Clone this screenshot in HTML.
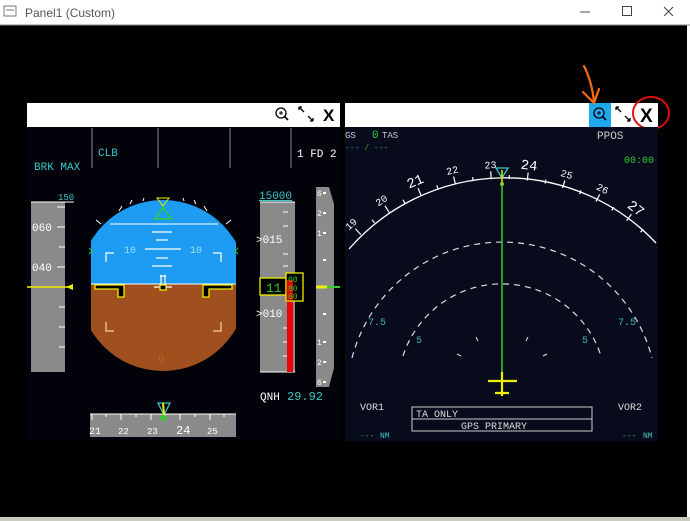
<!DOCTYPE html>
<html><head><meta charset="utf-8"><style>
html,body{margin:0;padding:0;background:#fff;}
svg{display:block;font-family:"Liberation Mono",monospace;}
.t{font-family:"Liberation Sans",sans-serif;}
</style></head><body>
<svg width="690" height="521" viewBox="0 0 690 521" xmlns="http://www.w3.org/2000/svg">
<rect width="690" height="521" fill="#fff"/>
<!-- title bar -->
<rect x="4" y="6" width="12" height="10" fill="none" stroke="#777" stroke-width="1"/>
<line x1="6" y1="10" x2="14" y2="10" stroke="#777"/>
<text class="t" x="25" y="17" font-size="12" fill="#555">Panel1 (Custom)</text>
<line x1="580" y1="12" x2="590" y2="12" stroke="#444"/>
<rect x="622.5" y="6.5" width="9" height="9" fill="none" stroke="#444"/>
<path d="M664 7 L673 16 M673 7 L664 16" stroke="#444"/>
<line x1="0" y1="25" x2="690" y2="25" stroke="#888"/>
<!-- window black -->
<rect x="0" y="25.5" width="687" height="492" fill="#000"/>
<rect x="0" y="517" width="690" height="4" fill="#c9ccc0"/>

<!-- ===== PFD ===== -->
<rect x="27" y="103" width="313" height="24" fill="#fff"/>
<circle cx="281" cy="113" r="5" fill="none" stroke="#000" stroke-width="1.3"/>
<line x1="284.5" y1="116.5" x2="288" y2="120" stroke="#000" stroke-width="1.6"/>
<path d="M279 113h4M281 111v4" stroke="#000"/>
<path d="M299 107l5 5M299 107h3M299 107v3M313 121l-5-5M313 121h-3M313 121v-3" stroke="#000" stroke-width="1.3" fill="none"/>
<text class="t" x="323" y="121" font-size="17" font-weight="bold" fill="#000">X</text>
<rect x="27" y="127" width="313" height="313" fill="#02030a"/>
<g stroke="#888" stroke-width="1"><line x1="92" y1="128" x2="92" y2="168"/><line x1="158" y1="128" x2="158" y2="168"/><line x1="230" y1="128" x2="230" y2="168"/><line x1="291" y1="128" x2="291" y2="168"/></g>
<text x="98" y="156" font-size="11" fill="#3cc6c6">CLB</text>
<text x="34" y="170" font-size="11" fill="#3cc6c6">BRK MAX</text>
<text x="297" y="157" font-size="11" fill="#fff">1 FD 2</text>
<!-- speed tape -->
<rect x="31" y="202" width="34" height="170" fill="#8a8a8a"/>
<line x1="31" y1="202" x2="74" y2="202" stroke="#fff"/>
<text x="58" y="200" font-size="9" fill="#3cc6c6">150</text>
<g stroke="#fff" stroke-width="1"><line x1="57" y1="207" x2="65" y2="207"/><line x1="57" y1="227" x2="65" y2="227"/><line x1="59" y1="247" x2="65" y2="247"/><line x1="57" y1="267" x2="65" y2="267"/><line x1="59" y1="307" x2="65" y2="307"/><line x1="59" y1="327" x2="65" y2="327"/><line x1="59" y1="347" x2="65" y2="347"/></g>
<text x="32" y="231" font-size="11" fill="#fff">060</text>
<text x="32" y="271" font-size="11" fill="#fff">040</text>
<line x1="27" y1="287" x2="70" y2="287" stroke="#ee0" stroke-width="1.5"/>
<path d="M66 287l7-3v6z" fill="#ee0"/>
<!-- attitude -->
<defs><clipPath id="att"><rect x="91" y="190" width="145" height="190"/></clipPath></defs>
<g clip-path="url(#att)">
<circle cx="163" cy="287" r="84" fill="#a0501e"/>
<path d="M79 284 A84 84 0 0 1 247 284 Z" fill="#1e9bf2"/>
</g>
<line x1="91" y1="284" x2="236" y2="284" stroke="#fff"/>
<line x1="110" y1="224" x2="218" y2="224" stroke="#fff"/>
<g stroke="#fff" stroke-width="1.2" fill="none">
<line x1="152" y1="232" x2="172" y2="232"/><line x1="156" y1="240" x2="168" y2="240"/>
<line x1="145" y1="249" x2="181" y2="249"/><line x1="156" y1="258" x2="168" y2="258"/><line x1="152" y1="266" x2="172" y2="266"/>
<path d="M106 262v-9h8M221 262v-9h-8"/>
<path d="M161 275v10M165 275v10M160 276h6"/>
<path d="M106 322v9h8M221 322v9h-8" stroke="#f5d0a0"/>
<line x1="154" y1="287" x2="172" y2="287"/>
</g>
<text x="124" y="253" font-size="10" fill="#9ee0ff">10</text>
<text x="190" y="253" font-size="10" fill="#9ee0ff">10</text>
<text x="158" y="362" font-size="11" fill="#c06020">0</text>
<g stroke="#fff" stroke-width="1" fill="none">
<path d="M119 211l3-5M130 204l2-4M143 201l1-3M184 201l-1-3M196 204l-2-4M207 211l-3-5M101 224l-5-4M226 224l5-4"/>
</g>
<path d="M157 198h12l-6 8z" fill="none" stroke="#ee0"/>
<path d="M163 207l-8 12h16z" fill="none" stroke="#3c3" stroke-width="1.5"/>
<path d="M89 248l3 3-3 3M238 248l-3 3 3 3" stroke="#3c3" fill="none"/>
<g stroke="#ee0" stroke-width="1.3" fill="#000">
<path d="M95 285h29v12h-6v-8h-23z"/><path d="M232 285h-29v12h6v-8h23z"/>
<rect x="160" y="285" width="6" height="5"/>
</g>
<!-- altitude -->
<rect x="260" y="202" width="28" height="170" fill="#8a8a8a"/>
<rect x="288" y="202" width="7" height="170" fill="#8a8a8a"/>
<line x1="260" y1="202" x2="295" y2="202" stroke="#fff"/>
<text x="259" y="199" font-size="11" fill="#3cc6c6" text-decoration="underline">15000</text>
<text x="256" y="243" font-size="11" fill="#fff">&gt;015</text>
<text x="256" y="317" font-size="11" fill="#fff">&gt;010</text>
<g stroke="#fff"><line x1="283" y1="212" x2="288" y2="212"/><line x1="283" y1="226" x2="288" y2="226"/><line x1="283" y1="254" x2="288" y2="254"/><line x1="283" y1="266" x2="288" y2="266"/><line x1="283" y1="328" x2="288" y2="328"/><line x1="283" y1="342" x2="288" y2="342"/><line x1="283" y1="356" x2="288" y2="356"/></g>
<line x1="260" y1="372" x2="295" y2="372" stroke="#fff"/>
<rect x="287" y="296" width="6" height="76" fill="#e00"/>
<rect x="260" y="278" width="26" height="17" fill="#000" stroke="#ee0" stroke-width="1.3"/>
<rect x="286" y="273" width="17" height="28" fill="#000" stroke="#ee0" stroke-width="1.3"/>
<rect x="287" y="280" width="6" height="20" fill="#e00"/>
<text x="266" y="292" font-size="13" fill="#3c3">11</text>
<text x="288" y="282" font-size="8" fill="#3c3">00</text>
<text x="288" y="291" font-size="8" fill="#3c3">80</text>
<text x="288" y="299" font-size="8" fill="#3c3">60</text>
<!-- VS -->
<path d="M316 187h13l5 17v164l-5 19h-13z" fill="#8a8a8a"/>
<g font-size="8" fill="#fff"><text x="317" y="196">6</text><text x="317" y="216">2</text><text x="317" y="236">1</text><text x="317" y="345">1</text><text x="317" y="365">2</text><text x="317" y="385">6</text></g>
<g stroke="#fff" stroke-width="2"><path d="M323 193h3M323 213h3M323 233h3M323 342h3M323 362h3M323 382h3M323 260h3M323 314h3"/></g>
<line x1="316" y1="287" x2="327" y2="287" stroke="#ee0" stroke-width="3"/>
<line x1="327" y1="287" x2="340" y2="287" stroke="#3c3" stroke-width="2"/>
<text x="260" y="400" font-size="11" fill="#fff">QNH</text>
<text x="287" y="400" font-size="12" fill="#3cc6c6">29.92</text>
<!-- heading tape -->
<rect x="90" y="414" width="146" height="23" fill="#8a8a8a"/>
<line x1="90" y1="414" x2="236" y2="414" stroke="#fff"/>
<g stroke="#fff"><path d="M92 414v6M106 414v3M121 414v6M136 414v3M151 414v6M165 414v3M180 414v6M195 414v3M210 414v6M224 414v3"/></g>
<g font-size="10" fill="#fff"><text x="89" y="434">21</text><text x="118" y="434" font-size="9">22</text><text x="147" y="434" font-size="9">23</text><text x="176" y="434" font-size="12">24</text><text x="207" y="434" font-size="9">25</text></g>
<path d="M158 403h12l-6 12z" fill="none" stroke="#3cc6c6" stroke-width="1.3"/>
<line x1="163" y1="403" x2="164" y2="415" stroke="#ee0" stroke-width="2"/>
<circle cx="163.5" cy="418" r="3" fill="#3c3"/>

<!-- ===== ND ===== -->
<rect x="345" y="103" width="313" height="24" fill="#fff"/>
<rect x="589" y="103" width="22" height="24" fill="#1ea8ee"/>
<circle cx="599" cy="113" r="5" fill="none" stroke="#000" stroke-width="1.3"/>
<line x1="602.5" y1="116.5" x2="606" y2="120" stroke="#000" stroke-width="1.6"/>
<path d="M597 113h4M599 111v4" stroke="#000"/>
<path d="M616 107l5 5M616 107h3M616 107v3M630 121l-5-5M630 121h-3M630 121v-3" stroke="#000" stroke-width="1.3" fill="none"/>
<text class="t" x="640" y="122" font-size="19" font-weight="bold" fill="#000">X</text>
<ellipse cx="651" cy="113" rx="18" ry="16" fill="none" stroke="#e01010" stroke-width="2"/>
<path d="M584 66 Q592 82 594 102 M583 92 L594 103 L599 89" fill="none" stroke="#ff6a10" stroke-width="2.2" stroke-linecap="round"/>
<rect x="345" y="127" width="313" height="314" fill="#070b1c"/>
<text x="345" y="138" font-size="9" fill="#ccc">GS</text>
<text x="372" y="138" font-size="11" fill="#3c3">0</text>
<text x="382" y="138" font-size="9" fill="#ccc">TAS</text>
<text x="345" y="150" font-size="8" fill="#3a3">--- / ---</text>
<text x="597" y="139" font-size="11" fill="#ccc">PPOS</text>
<text x="624" y="163" font-size="10" fill="#3c3">00:00</text>
<!-- compass -->
<path d="M349 249 A207 207 0 0 1 656 243" fill="none" stroke="#fff" stroke-width="1.3"/>
<g stroke="#fff" stroke-width="1.2">
<g transform="rotate(-43 502 386)"><line x1="502" y1="179" x2="502" y2="171"/></g>
<g transform="rotate(-38 502 386)"><line x1="502" y1="179" x2="502" y2="175"/></g>
<g transform="rotate(-33 502 386)"><line x1="502" y1="179" x2="502" y2="171"/></g>
<g transform="rotate(-28 502 386)"><line x1="502" y1="179" x2="502" y2="175"/></g>
<g transform="rotate(-23 502 386)"><line x1="502" y1="179" x2="502" y2="171"/></g>
<g transform="rotate(-18 502 386)"><line x1="502" y1="179" x2="502" y2="175"/></g>
<g transform="rotate(-13 502 386)"><line x1="502" y1="179" x2="502" y2="171"/></g>
<g transform="rotate(-8 502 386)"><line x1="502" y1="179" x2="502" y2="175"/></g>
<g transform="rotate(-3 502 386)"><line x1="502" y1="179" x2="502" y2="171"/></g>
<g transform="rotate(2 502 386)"><line x1="502" y1="179" x2="502" y2="175"/></g>
<g transform="rotate(7 502 386)"><line x1="502" y1="179" x2="502" y2="171"/></g>
<g transform="rotate(12 502 386)"><line x1="502" y1="179" x2="502" y2="175"/></g>
<g transform="rotate(17 502 386)"><line x1="502" y1="179" x2="502" y2="171"/></g>
<g transform="rotate(22 502 386)"><line x1="502" y1="179" x2="502" y2="175"/></g>
<g transform="rotate(27 502 386)"><line x1="502" y1="179" x2="502" y2="171"/></g>
<g transform="rotate(32 502 386)"><line x1="502" y1="179" x2="502" y2="175"/></g>
<g transform="rotate(37 502 386)"><line x1="502" y1="179" x2="502" y2="171"/></g>
<g transform="rotate(42 502 386)"><line x1="502" y1="179" x2="502" y2="175"/></g>
</g>
<g fill="#fff" text-anchor="middle">
<g transform="rotate(-43 502 386)"><text x="502" y="168" font-size="10">19</text></g>
<g transform="rotate(-33 502 386)"><text x="502" y="168" font-size="10">20</text></g>
<g transform="rotate(-23 502 386)"><text x="502" y="168" font-size="14">21</text></g>
<g transform="rotate(-13 502 386)"><text x="502" y="168" font-size="10">22</text></g>
<g transform="rotate(-3 502 386)"><text x="502" y="168" font-size="10">23</text></g>
<g transform="rotate(7 502 386)"><text x="502" y="168" font-size="14">24</text></g>
<g transform="rotate(17 502 386)"><text x="502" y="168" font-size="10">25</text></g>
<g transform="rotate(27 502 386)"><text x="502" y="168" font-size="10">26</text></g>
<g transform="rotate(37 502 386)"><text x="502" y="168" font-size="14">27</text></g>
</g>
<g fill="none" stroke="#ddd" stroke-width="1.2" stroke-dasharray="6 5">
<path d="M352 358 A155 155 0 0 1 652 358"/>
<path d="M403 356 A104 104 0 0 1 601 356"/>
</g>
<g stroke="#ddd" stroke-width="1"><path d="M476 337l2 4M528 337l-2 4M457 354l4 2M547 354l-4 2"/></g>
<g font-size="10" fill="#3cb0b0"><text x="368" y="325">7.5</text><text x="618" y="325">7.5</text><text x="416" y="343">5</text><text x="582" y="343">5</text></g>
<line x1="502" y1="182" x2="502" y2="390" stroke="#3c3" stroke-width="1.5"/>
<path d="M496 168h12l-6 10z" fill="none" stroke="#3cc6c6" stroke-width="1.3"/>
<line x1="502" y1="170" x2="502" y2="182" stroke="#ee0" stroke-width="1.5"/>
<circle cx="502" cy="184" r="2" fill="#8c3"/>
<g stroke="#ee0" stroke-width="2.2"><path d="M488 381h29M502 372v24M495 393h14"/></g>
<text x="360" y="410" font-size="10" fill="#ddd">VOR1</text>
<text x="618" y="410" font-size="10" fill="#ddd">VOR2</text>
<rect x="412" y="407" width="180" height="24" fill="none" stroke="#ccc"/>
<line x1="412" y1="419" x2="592" y2="419" stroke="#ccc"/>
<text x="416" y="417" font-size="10" fill="#ddd">TA ONLY</text>
<text x="461" y="429" font-size="10" fill="#ddd">GPS PRIMARY</text>
<text x="360" y="438" font-size="8" fill="#3a3">---</text><text x="380" y="438" font-size="8" fill="#3cc6c6">NM</text>
<text x="622" y="438" font-size="8" fill="#3a3">---</text><text x="643" y="438" font-size="8" fill="#3cc6c6">NM</text>
</svg>
</body></html>
